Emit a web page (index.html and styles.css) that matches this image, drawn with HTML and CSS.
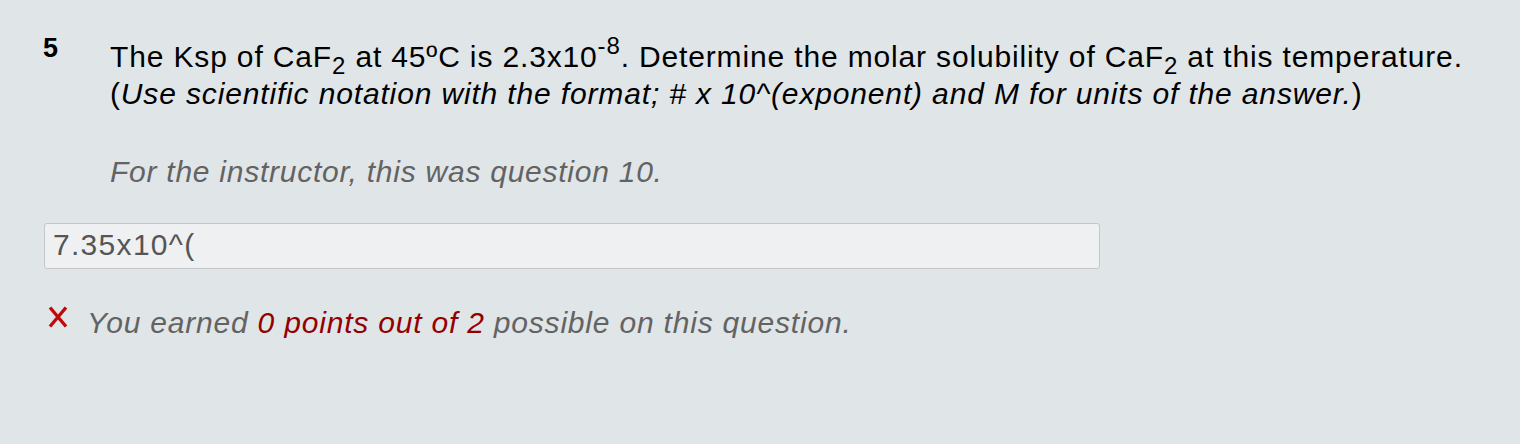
FILE: index.html
```html
<!DOCTYPE html>
<html>
<head>
<meta charset="utf-8">
<link rel="stylesheet" href="styles.css">
</head>
<body>
<div class="question">
  <div class="qhead">
    <div class="qnum">5</div>
    <div class="qbody">
      <div class="qtext">The Ksp of CaF<sub>2</sub> at 45ºC is 2.3x10<sup>-8</sup>. Determine the molar solubility of CaF<sub>2</sub> at this temperature.<br>(<em>Use scientific notation with the format; # x 10^(exponent) and M for units of the answer.</em>)</div>
      <div class="instructor">For the instructor, this was question 10.</div>
    </div>
  </div>
  <div class="answer">7.35x10^(</div>
  <div class="result">
    <svg class="xmark" width="20" height="22" viewBox="0 0 20 22"><path d="M2 1.5 L18 20.5 M18 1.5 L2 20.5" stroke="#c00a0a" stroke-width="3.4" fill="none"/></svg>
    <span class="rtext">You earned <span class="pts">0 points out of 2</span> possible on this question.</span>
  </div>
</div>
</body>
</html>
```
FILE: styles.css
```css
html, body {
  margin: 0;
  padding: 0;
  background: #e0e5e8;
}
body {
  font-family: "Liberation Sans", Arial, sans-serif;
  color: #000;
}
.question {
  padding: 38px 0 0 43px;
}
.qhead {
  display: flex;
}
.qnum {
  width: 67px;
  font-weight: bold;
  font-size: 27px;
  line-height: 27px;
  margin-top: -3px;
}
.qbody {
  flex: 1;
}
.qtext {
  font-size: 30px;
  line-height: 37px;
  letter-spacing: 0.85px;
}
.qtext sub, .qtext sup {
  font-size: 0.8em;
  line-height: 0;
}
.qtext sub { vertical-align: -0.3em; }
.qtext sup { vertical-align: 0.55em; }
.instructor {
  margin-top: 45px;
  font-size: 30px;
  font-style: italic;
  color: #636363;
  line-height: 30px;
  letter-spacing: 0.75px;
}
.answer {
  margin-top: 36px;
  margin-left: 1px;
  width: 1056px;
  height: 46px;
  box-sizing: border-box;
  border: 1px solid #c4c6c8;
  border-radius: 3px;
  background: #eff0f2;
  font-size: 30px;
  letter-spacing: 1.3px;
  color: #555;
  padding: 0 0 0 8px;
  line-height: 42px;
}
.result {
  margin-top: 39px;
  display: flex;
  align-items: flex-start;
  font-size: 30px;
  line-height: 30px;
  font-style: italic;
  color: #636363;
  letter-spacing: 0.8px;
}
.xmark {
  margin: -2px 19px 0 5px;
  flex: none;
}
.pts {
  color: #930000;
}
```
